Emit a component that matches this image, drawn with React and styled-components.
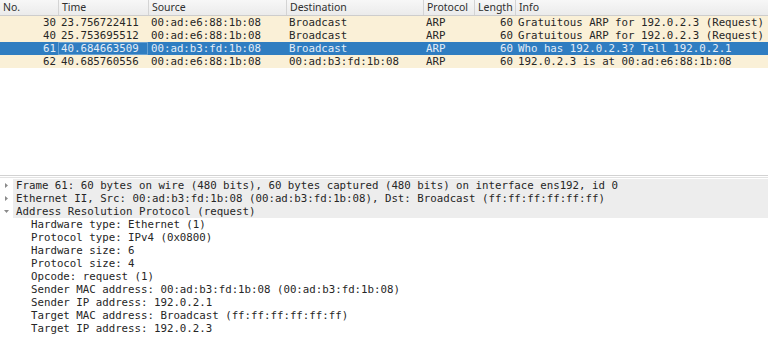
import React from "react";
import styled, { createGlobalStyle } from "styled-components";

const GlobalStyle = createGlobalStyle`
  body {
    margin: 0;
    background: #ffffff;
  }
`;

const COLS = "58px 90px 138px 137px 51px 41px 1fr";

const Window = styled.div`
  width: 768px;
  height: 341px;
  display: flex;
  flex-direction: column;
  overflow: hidden;
  background: #ffffff;
`;

const PacketList = styled.div`
  height: 175px;
  flex: none;
`;

const HeaderRow = styled.div`
  display: grid;
  grid-template-columns: ${COLS};
  height: 15px;
  border-bottom: 1px solid #cdcdcd;
  background: linear-gradient(#f7f7f7, #ebebeb);
`;

const HeaderCell = styled.div`
  font-family: "Noto Sans", "Open Sans", sans-serif;
  font-size: 10.5px;
  line-height: 15px;
  color: #2f2f2f;
  padding-left: 3px;
  border-left: ${(p) => (p.$first ? "none" : "1px solid #d4d4d4")};
  white-space: nowrap;
  overflow: hidden;
`;

const PacketRow = styled.div`
  display: grid;
  grid-template-columns: ${COLS};
  height: 13px;
  background: ${(p) => (p.$selected ? "#2f7dc1" : "#faf0d7")};
  color: ${(p) => (p.$selected ? "#e4edf7" : "#262626")};
`;

const Cell = styled.div`
  font-family: "DejaVu Sans Mono", "Liberation Mono", monospace;
  font-size: 10.75px;
  line-height: 13px;
  padding: 0 2px 0 3px;
  text-align: ${(p) => (p.$right ? "right" : "left")};
  white-space: nowrap;
  overflow: hidden;
  box-sizing: border-box;
  outline: ${(p) => (p.$focus ? "1px solid rgba(255,255,255,0.28)" : "none")};
  outline-offset: -1px;
`;

const Splitter = styled.div`
  height: 1px;
  flex: none;
  border-top: 1px solid #d2d2d2;
  border-bottom: 1px solid #e2e2e2;
`;

const Details = styled.div`
  flex: 1;
  padding-top: 1px;
`;

const TreeRow = styled.div`
  display: flex;
  height: 13px;
  align-items: center;
`;

const Toggle = styled.div`
  width: 13px;
  height: 13px;
  flex: none;
  display: flex;
  align-items: center;
  justify-content: center;
`;

const TreeText = styled.div`
  flex: 1;
  height: 13px;
  font-family: "DejaVu Sans Mono", "Liberation Mono", monospace;
  font-size: 10.75px;
  line-height: 13px;
  color: #262626;
  white-space: nowrap;
  padding-left: ${(p) => (p.$child ? "31px" : "3px")};
  background: ${(p) => (p.$shaded ? "#ededed" : "transparent")};
`;

const Arrow = ({ open }) => (
  <svg width="7" height="7" viewBox="0 0 7 7">
    {open ? (
      <polygon points="1,2 6,2 3.5,5" fill="#8a8a8a" />
    ) : (
      <polygon points="2,1 5,3.5 2,6" fill="#8a8a8a" />
    )}
  </svg>
);

const columns = ["No.", "Time", "Source", "Destination", "Protocol", "Length", "Info"];

const packets = [
  { no: 30, time: "23.756722411", src: "00:ad:e6:88:1b:08", dst: "Broadcast", proto: "ARP", len: 60, info: "Gratuitous ARP for 192.0.2.3 (Request)" },
  { no: 40, time: "25.753695512", src: "00:ad:e6:88:1b:08", dst: "Broadcast", proto: "ARP", len: 60, info: "Gratuitous ARP for 192.0.2.3 (Request)" },
  { no: 61, time: "40.684663509", src: "00:ad:b3:fd:1b:08", dst: "Broadcast", proto: "ARP", len: 60, info: "Who has 192.0.2.3? Tell 192.0.2.1", selected: true },
  { no: 62, time: "40.685760556", src: "00:ad:e6:88:1b:08", dst: "00:ad:b3:fd:1b:08", proto: "ARP", len: 60, info: "192.0.2.3 is at 00:ad:e6:88:1b:08" },
];

const tree = [
  { text: "Frame 61: 60 bytes on wire (480 bits), 60 bytes captured (480 bits) on interface ens192, id 0", arrow: "closed" },
  { text: "Ethernet II, Src: 00:ad:b3:fd:1b:08 (00:ad:b3:fd:1b:08), Dst: Broadcast (ff:ff:ff:ff:ff:ff)", arrow: "closed" },
  { text: "Address Resolution Protocol (request)", arrow: "open" },
  { text: "Hardware type: Ethernet (1)", child: true },
  { text: "Protocol type: IPv4 (0x0800)", child: true },
  { text: "Hardware size: 6", child: true },
  { text: "Protocol size: 4", child: true },
  { text: "Opcode: request (1)", child: true },
  { text: "Sender MAC address: 00:ad:b3:fd:1b:08 (00:ad:b3:fd:1b:08)", child: true },
  { text: "Sender IP address: 192.0.2.1", child: true },
  { text: "Target MAC address: Broadcast (ff:ff:ff:ff:ff:ff)", child: true },
  { text: "Target IP address: 192.0.2.3", child: true },
];

const App = () => {
  return (
    <>
      <GlobalStyle />
      <Window>
        <PacketList>
          <HeaderRow>
            {columns.map((c, i) => (
              <HeaderCell key={c} $first={i === 0}>
                {c}
              </HeaderCell>
            ))}
          </HeaderRow>
          {packets.map((p) => (
            <PacketRow key={p.no} $selected={p.selected}>
              <Cell $right>{p.no}</Cell>
              <Cell $focus={p.selected}>{p.time}</Cell>
              <Cell>{p.src}</Cell>
              <Cell>{p.dst}</Cell>
              <Cell>{p.proto}</Cell>
              <Cell $right>{p.len}</Cell>
              <Cell>{p.info}</Cell>
            </PacketRow>
          ))}
        </PacketList>
        <Splitter />
        <Details>
          {tree.map((t, i) => (
            <TreeRow key={i}>
              {!t.child && (
                <Toggle>
                  <Arrow open={t.arrow === "open"} />
                </Toggle>
              )}
              <TreeText $child={t.child} $shaded={!t.child}>
                {t.text}
              </TreeText>
            </TreeRow>
          ))}
        </Details>
      </Window>
    </>
  );
};

export default App;
